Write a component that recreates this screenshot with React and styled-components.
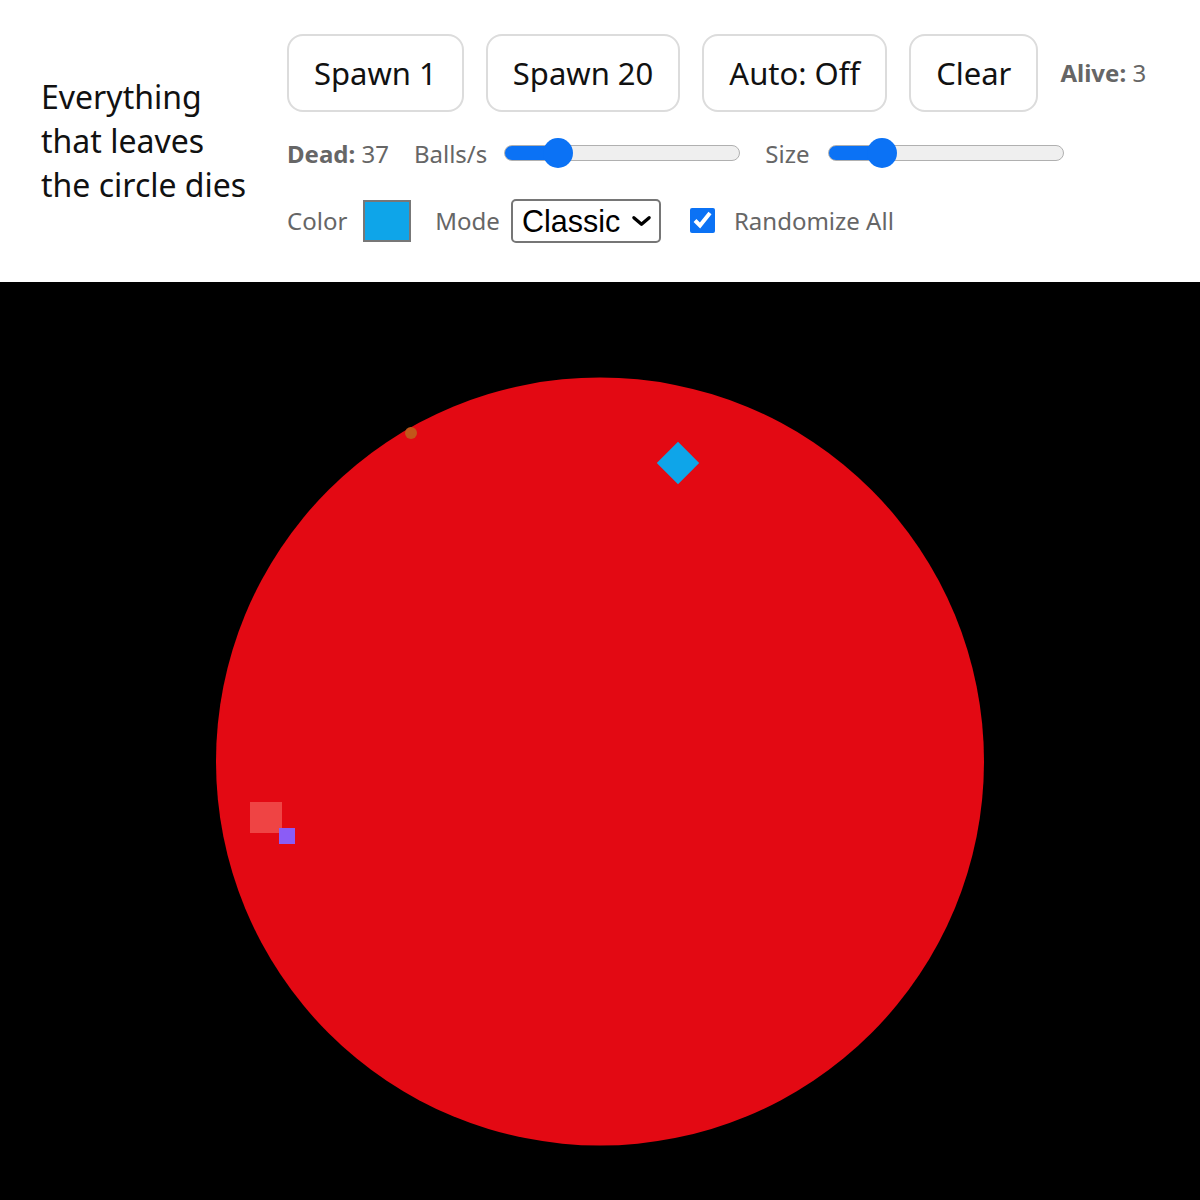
import React, { useState } from "react";
import styled, { createGlobalStyle } from "styled-components";

const Global = createGlobalStyle`
  html, body { margin: 0; padding: 0; background: #fff; }
  body { font-family: "Noto Sans", "DejaVu Sans", sans-serif; }
  * { box-sizing: border-box; }
`;

const chevron =
  "data:image/svg+xml;utf8," +
  encodeURIComponent(
    '<svg xmlns="http://www.w3.org/2000/svg" width="22" height="12" viewBox="0 0 22 12"><path d="M3 2.5 L11 9.5 L19 2.5" fill="none" stroke="#000" stroke-width="3.4" stroke-linecap="round" stroke-linejoin="round"/></svg>'
  );

const Page = styled.div`
  width: 1200px;
  height: 1200px;
  display: flex;
  flex-direction: column;
  overflow: hidden;
`;

const Header = styled.header`
  display: flex;
  align-items: center;
  gap: 31px;
  padding: 33px 40px 39px 41px;
  background: #fff;
  height: 282px;
  flex: none;
`;

const Title = styled.h1`
  margin: 0;
  padding-top: 5px;
  width: 215px;
  font-size: 32px;
  font-weight: 400;
  line-height: 44px;
  color: #111;
`;

const Controls = styled.div`
  display: flex;
  flex-direction: column;
`;

const Row = styled.div`
  display: flex;
  align-items: center;
  gap: ${(p) => p.$gap || 22}px;
  margin-top: ${(p) => p.$top || 0}px;
  height: ${(p) => p.$h}px;
`;

const Group = styled.div`
  display: flex;
  align-items: center;
  gap: ${(p) => p.$gap || 18}px;
  margin-left: ${(p) => p.$ml || 0}px;
`;

const Button = styled.button`
  font-family: "Noto Sans", sans-serif;
  font-size: 31px;
  line-height: 44px;
  color: #111;
  background: #fff;
  border: 2px solid #dcdcdc;
  border-radius: 16px;
  padding: 15px 25px;
  cursor: pointer;
`;

const Stat = styled.span`
  font-size: 24px;
  color: #666;
  line-height: 33px;
  white-space: nowrap;
  margin-right: ${(p) => p.$mr || 0}px;
  b { font-weight: 700; }
`;

const Label = styled.span`
  font-size: 24px;
  color: #666;
  line-height: 33px;
  white-space: nowrap;
`;

const Range = styled.input.attrs({ type: "range" })`
  -webkit-appearance: none;
  appearance: none;
  width: 236px;
  height: 30px;
  margin: 0;
  background: transparent;
  &::-webkit-slider-runnable-track {
    height: 16px;
    border-radius: 8px;
    border: 1.5px solid #b0b0b0;
    background: linear-gradient(
      to right,
      #0b72f5 0,
      #0b72f5 var(--fill),
      #efefef var(--fill),
      #efefef 100%
    );
  }
  &::-webkit-slider-thumb {
    -webkit-appearance: none;
    width: 30px;
    height: 30px;
    margin-top: -8.5px;
    border-radius: 50%;
    background: #0b72f5;
    border: none;
  }
`;

const ColorInput = styled.input.attrs({ type: "color" })`
  -webkit-appearance: none;
  appearance: none;
  width: 48px;
  height: 42px;
  padding: 0;
  border: none;
  background: transparent;
  cursor: pointer;
  &::-webkit-color-swatch-wrapper { padding: 0; }
  &::-webkit-color-swatch { border: 2px solid #777; border-radius: 0; }
`;

const Select = styled.select`
  -webkit-appearance: none;
  appearance: none;
  font-family: "Liberation Sans", Arial, sans-serif;
  font-size: 30.5px;
  width: 150px;
  height: 44px;
  padding: 0 0 0 9px;
  border: 2px solid #767676;
  border-radius: 5px;
  color: #000;
  background: #fff url("${chevron}") no-repeat right 7px center / 21px 12px;
`;

const Check = styled.input.attrs({ type: "checkbox" })`
  width: 25px;
  height: 25px;
  margin: 0;
  accent-color: #0b72f5;
`;

const Stage = styled.div`
  flex: 1;
  background: #000;
  display: flex;
`;

const fill = (v) => `${(v / 100) * 206 + 15}px`;

export default function App() {
  const [rate, setRate] = useState(18.5);
  const [size, setSize] = useState(18.5);
  const [rand, setRand] = useState(true);
  return (
    <Page>
      <Global />
      <Header>
        <Title>Everything that leaves the circle dies</Title>
        <Controls>
          <Row $h={78} $gap={22}>
            <Button>Spawn 1</Button>
            <Button>Spawn 20</Button>
            <Button>Auto: Off</Button>
            <Button>Clear</Button>
            <Stat>
              <b>Alive:</b> 3
            </Stat>
          </Row>
          <Row $h={33} $top={25} $gap={22}>
            <Stat $mr={3}>
              <b>Dead:</b> 37
            </Stat>
            <Group $gap={17}>
              <Label>Balls/s</Label>
              <Range
                min={0}
                max={100}
                step={0.5}
                value={rate}
                onChange={(e) => setRate(+e.target.value)}
                style={{ "--fill": fill(rate) }}
              />
            </Group>
            <Group $gap={19} $ml={3}>
              <Label>Size</Label>
              <Range
                min={0}
                max={100}
                step={0.5}
                value={size}
                onChange={(e) => setSize(+e.target.value)}
                style={{ "--fill": fill(size) }}
              />
            </Group>
          </Row>
          <Row $h={44} $top={29} $gap={24}>
            <Group $gap={16}>
              <Label>Color</Label>
              <ColorInput defaultValue="#0ea5e9" />
            </Group>
            <Group $gap={11}>
              <Label>Mode</Label>
              <Select defaultValue="classic">
                <option value="classic">Classic</option>
                <option value="chaos">Chaos</option>
              </Select>
            </Group>
            <Group $gap={19} $ml={5}>
              <Check checked={rand} onChange={(e) => setRand(e.target.checked)} />
              <Label>Randomize All</Label>
            </Group>
          </Row>
        </Controls>
      </Header>
      <Stage>
        <svg width="1200" height="918" viewBox="0 0 1200 918">
          <circle cx="600" cy="479.5" r="384" fill="#e30913" />
          <circle cx="411" cy="151" r="6" fill="#c2561a" />
          <rect x="663" y="166" width="30" height="30" fill="#0ea5e9" transform="rotate(45 678 181)" />
          <rect x="250" y="520" width="32" height="31" fill="#ef4444" />
          <rect x="279" y="546" width="16" height="16" fill="#8b5cf6" />
        </svg>
      </Stage>
    </Page>
  );
}
